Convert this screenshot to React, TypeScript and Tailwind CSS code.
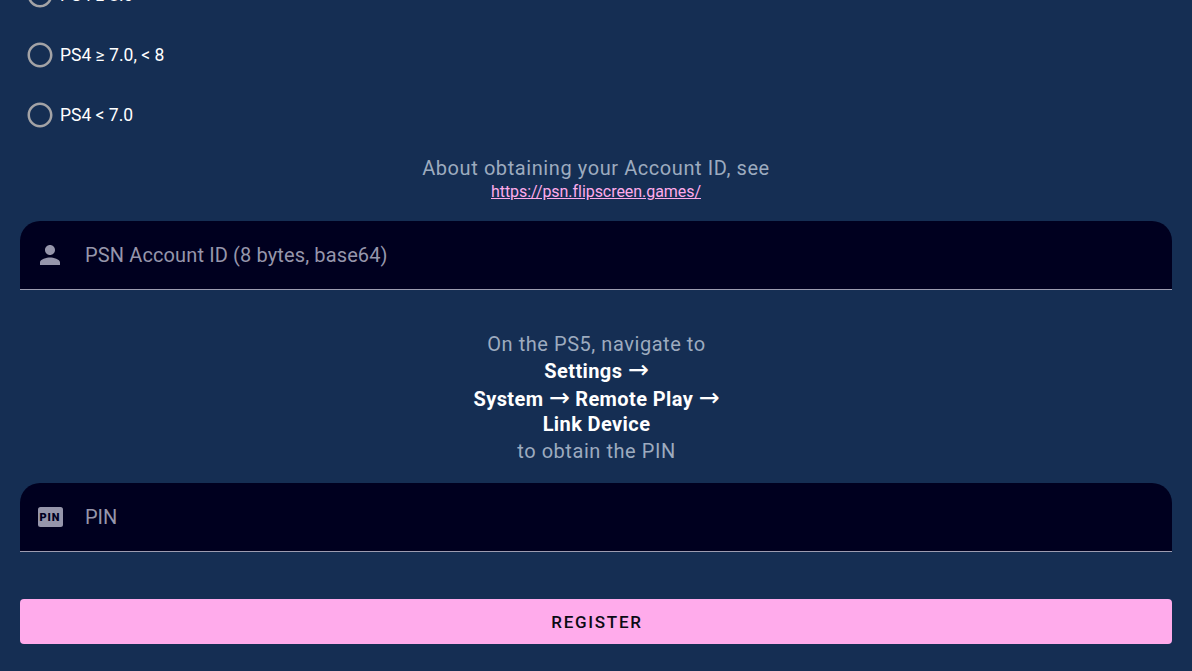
import { MdPerson, MdRadioButtonUnchecked } from "react-icons/md";

function Radio({ label }: { label: string }) {
  return (
    <div className="flex h-[60px] items-center pl-[24.5px]">
      <MdRadioButtonUnchecked className="h-[30px] w-[30px] text-[#a3a3a6]" />
      <span className="ml-[5.5px] text-[17.5px] text-white">{label}</span>
    </div>
  );
}

function Arrow() {
  return <span className="font-['DejaVu_Sans',sans-serif] text-[25px] leading-[0] font-normal tracking-normal">→</span>;
}

function PinIcon() {
  return (
    <span className="mx-[2.5px] flex h-[20px] w-[25px] items-center justify-center rounded-[2.5px] bg-[#9696ab] text-[11px] leading-none font-black tracking-[0.9px] text-[#00001f]">
      PIN
    </span>
  );
}

export default function App() {
  return (
    <div className="h-[671px] overflow-hidden bg-[#152e53] font-['Roboto',sans-serif]">
      <div className="-mt-[35px]">
        <Radio label="PS4 ≥ 8.0" />
        <Radio label="PS4 ≥ 7.0, < 8" />
        <Radio label="PS4 < 7.0" />
      </div>

      <div className="mt-[11px] text-center">
        <p className="text-[20px] leading-[24px] tracking-[0.58px] text-[#9dabbf]">About obtaining your Account ID, see</p>
        <a className="block text-[16px] leading-[23px] tracking-[-0.05px] text-[#ffabeb] underline">https://psn.flipscreen.games/</a>
      </div>

      <div className="mx-[20px] mt-[18px] flex h-[69px] items-center rounded-t-[20px] border-b border-[#9c9cb0] bg-[#00001f] pl-[15px]">
        <MdPerson className="h-[30px] w-[30px] text-[#9696ab]" />
        <span className="ml-[20px] text-[20px] tracking-[0.125px] text-[#9696ab]">PSN Account ID (8 bytes, base64)</span>
      </div>

      <div className="mt-[41px] pl-[1px] text-center text-[20px] tracking-[0.55px]">
        <p className="leading-[27px] text-[#9dabbf]">On the PS5, navigate to</p>
        <p className="leading-[27px] font-bold tracking-[0.4px] text-white">Settings <Arrow /></p>
        <p className="leading-[29px] font-bold tracking-[0.4px] text-white">System <Arrow /> Remote Play <Arrow /></p>
        <p className="leading-[20px] font-bold tracking-[0.4px] text-white">Link Device</p>
        <p className="leading-[34px] text-[#9dabbf]">to obtain the PIN</p>
      </div>

      <div className="mx-[20px] mt-[15px] flex h-[69px] items-center rounded-t-[20px] border-b border-[#9c9cb0] bg-[#00001f] pl-[15px]">
        <PinIcon />
        <span className="ml-[20px] text-[20px] text-[#9696ab]">PIN</span>
      </div>

      <button className="mx-[20px] mt-[47px] block h-[45px] w-[1152px] rounded-[4px] bg-[#ffabeb] pt-[3px] pl-[2px] text-[17px] font-medium tracking-[1.7px] text-[#0b0b14]">
        REGISTER
      </button>
    </div>
  );
}
